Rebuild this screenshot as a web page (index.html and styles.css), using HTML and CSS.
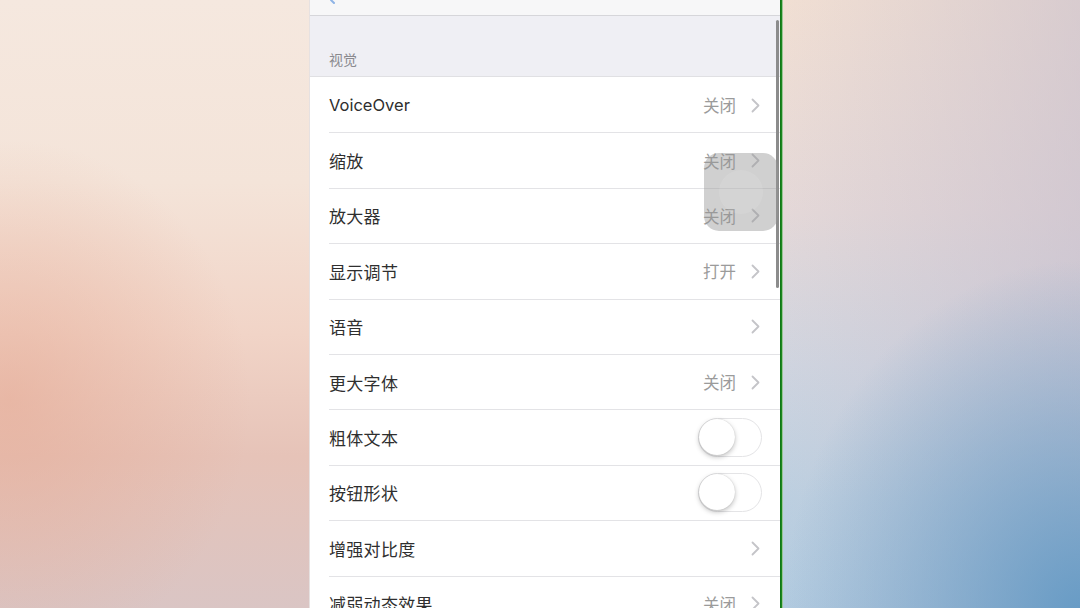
FILE: index.html
```html
<!DOCTYPE html>
<html lang="zh">
<head>
<meta charset="utf-8">
<title>辅助功能</title>
<link rel="stylesheet" href="styles.css">
</head>
<body>
<div class="stage">
  <div class="bg-left"></div>
  <div class="phone">
    <div class="navbar">
      <svg class="back" width="12" height="4" viewBox="0 0 12 4"><path d="M3 0 L6 3" stroke="#8fb4e6" stroke-width="2" fill="none" stroke-linecap="round"/></svg>
    </div>
    <div class="section-head">视觉</div>
    <div class="group">
      <div class="row"><span class="label latin">VoiceOver</span><span class="value">关闭</span><svg class="chev" viewBox="0 0 9 15"><path d="M1.5 1.5 L7.5 7.5 L1.5 13.5" /></svg></div>
      <div class="row"><span class="label">缩放</span><span class="value">关闭</span><svg class="chev" viewBox="0 0 9 15"><path d="M1.5 1.5 L7.5 7.5 L1.5 13.5" /></svg></div>
      <div class="row"><span class="label">放大器</span><span class="value">关闭</span><svg class="chev" viewBox="0 0 9 15"><path d="M1.5 1.5 L7.5 7.5 L1.5 13.5" /></svg></div>
      <div class="row"><span class="label">显示调节</span><span class="value">打开</span><svg class="chev" viewBox="0 0 9 15"><path d="M1.5 1.5 L7.5 7.5 L1.5 13.5" /></svg></div>
      <div class="row"><span class="label">语音</span><svg class="chev" viewBox="0 0 9 15"><path d="M1.5 1.5 L7.5 7.5 L1.5 13.5" /></svg></div>
      <div class="row"><span class="label">更大字体</span><span class="value">关闭</span><svg class="chev" viewBox="0 0 9 15"><path d="M1.5 1.5 L7.5 7.5 L1.5 13.5" /></svg></div>
      <div class="row toggle-row"><span class="label">粗体文本</span><span class="switch"><span class="knob"></span></span></div>
      <div class="row toggle-row"><span class="label">按钮形状</span><span class="switch"><span class="knob"></span></span></div>
      <div class="row"><span class="label">增强对比度</span><svg class="chev" viewBox="0 0 9 15"><path d="M1.5 1.5 L7.5 7.5 L1.5 13.5" /></svg></div>
      <div class="row"><span class="label">减弱动态效果</span><span class="value">关闭</span><svg class="chev" viewBox="0 0 9 15"><path d="M1.5 1.5 L7.5 7.5 L1.5 13.5" /></svg></div>
    </div>
    <div class="scrollbar"></div>
    <div class="assistive"><span class="ring"></span></div>
  </div>
  <div class="green-line"></div>
  <div class="bg-right"></div>
</div>
</body>
</html>
```

FILE: styles.css
```css
* { box-sizing: border-box; }
html, body {
  margin: 0;
  padding: 0;
  width: 1080px;
  height: 608px;
  overflow: hidden;
  font-family: "Noto Sans CJK SC", "Noto Sans", sans-serif;
}
.stage {
  display: flex;
  width: 1080px;
  height: 608px;
}
.bg-left {
  width: 309px;
  flex: none;
  background:
    radial-gradient(ellipse 240px 260px at 10px 400px, rgba(230, 170, 148, 0.6), rgba(230, 170, 148, 0) 100%),
    linear-gradient(180deg, #f5e8df 0%, #f4e4d9 30%, #f1d4c7 55%, #e6c3b8 75%, #dac5c4 100%);
}
.phone {
  position: relative;
  width: 471px;
  flex: none;
  height: 608px;
  overflow: hidden;
  background: #efeff4;
  border-left: 1px solid #e6e1e1;
}
.navbar {
  height: 16px;
  background: #f7f7f8;
  border-bottom: 1px solid #d6d6da;
  padding-left: 18px;
  display: flex;
  align-items: flex-start;
}
.back { display: block; }
.section-head {
  height: 61px;
  padding: 0 0 7px 19px;
  display: flex;
  align-items: flex-end;
  font-size: 14px;
  color: #8a8a8f;
  border-bottom: 1px solid #e0e0e3;
}
.group {
  background: #ffffff;
  padding-left: 19px;
}
.row {
  height: 55.4px;
  display: flex;
  align-items: center;
  padding-right: 20px;
  border-bottom: 1px solid #e3e3e6;
}
.row:first-child { height: 56.4px; padding-top: 1px; }
.label {
  flex: 1;
  font-size: 17px;
  color: #2f2f2f;
  letter-spacing: 0.3px;
}
.label.latin {
  font-family: "Inter", "Noto Sans", sans-serif;
  font-size: 16.5px;
  letter-spacing: 0;
  color: #2e2e2e;
}
.value {
  font-size: 16.5px;
  color: #9b9b9b;
  margin-right: 15px;
}
.chev {
  width: 9px;
  height: 15px;
  fill: none;
  stroke: #c4c4c8;
  stroke-width: 1.8;
  stroke-linecap: round;
  stroke-linejoin: round;
}
.toggle-row { padding-right: 18px; }
.switch {
  width: 64px;
  height: 39px;
  border-radius: 20px;
  background: #ffffff;
  border: 1.5px solid #e4e4e6;
  position: relative;
  display: block;
}
.knob {
  position: absolute;
  left: 0;
  top: 0;
  width: 36px;
  height: 36px;
  border-radius: 50%;
  background: #ffffff;
  box-shadow: 0 2px 5px rgba(0, 0, 0, 0.25), 0 0 1px rgba(0, 0, 0, 0.2);
}
.scrollbar {
  position: absolute;
  left: 466px;
  top: 20px;
  width: 3px;
  height: 268px;
  border-radius: 2px;
  background: #8c8c8c;
}
.assistive {
  position: absolute;
  left: 394px;
  top: 153px;
  width: 74px;
  height: 78px;
  border-radius: 15px;
  background: rgba(150, 150, 150, 0.45);
  display: flex;
  align-items: center;
  justify-content: center;
}
.ring {
  width: 44px;
  height: 44px;
  border-radius: 50%;
  background: rgba(255, 255, 255, 0.1);
}
.green-line {
  width: 3px;
  flex: none;
  background: linear-gradient(90deg, #0c6e14 0%, #1d8c20 60%, #f3ece6 100%);
}
.bg-right {
  flex: 1;
  background:
    radial-gradient(ellipse 300px 360px at 300px 620px, rgba(92, 150, 195, 0.9), rgba(92, 150, 195, 0) 100%),
    linear-gradient(90deg, rgba(200, 190, 205, 0) 0%, rgba(196, 188, 204, 0.55) 100%),
    linear-gradient(180deg, #f1dfd3 0%, #e4d8d8 35%, #cfd4df 60%, #bccfe0 82%, #b2cbe0 100%);
}
```
